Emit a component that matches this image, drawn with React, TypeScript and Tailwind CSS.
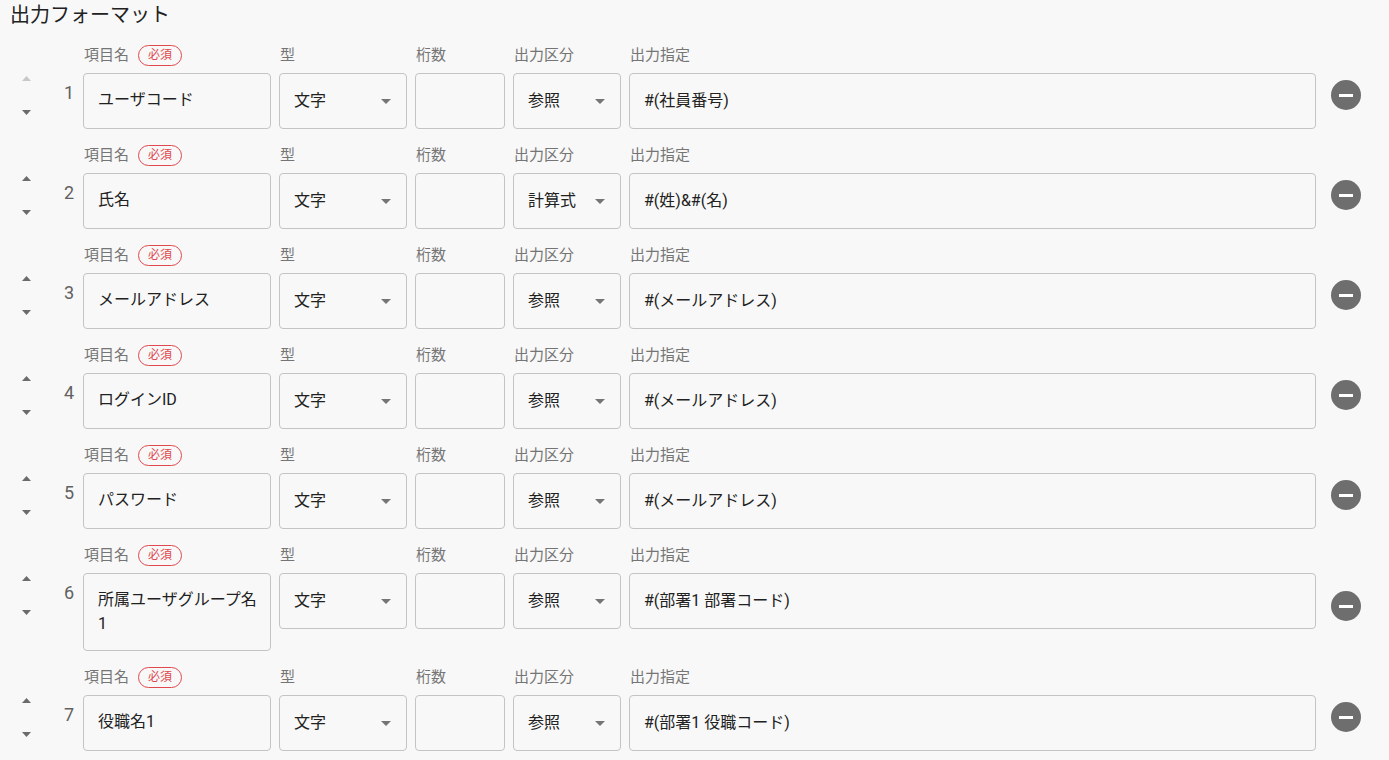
const font = {
  fontFamily: 'Roboto, "Noto Sans CJK JP", "Noto Sans", sans-serif',
};

type Row = {
  name: string;
  type: string;
  digits: string;
  kind: string;
  spec: string;
};

const rows: Row[] = [
  { name: "ユーザコード", type: "文字", digits: "", kind: "参照", spec: "#(社員番号)" },
  { name: "氏名", type: "文字", digits: "", kind: "計算式", spec: "#(姓)&#(名)" },
  { name: "メールアドレス", type: "文字", digits: "", kind: "参照", spec: "#(メールアドレス)" },
  { name: "ログインID", type: "文字", digits: "", kind: "参照", spec: "#(メールアドレス)" },
  { name: "パスワード", type: "文字", digits: "", kind: "参照", spec: "#(メールアドレス)" },
  { name: "所属ユーザグループ名1", type: "文字", digits: "", kind: "参照", spec: "#(部署1 部署コード)" },
  { name: "役職名1", type: "文字", digits: "", kind: "参照", spec: "#(部署1 役職コード)" },
];

function Caret() {
  return (
    <svg width="10" height="5" viewBox="0 0 10 5" className="shrink-0">
      <path d="M0 0 L10 0 L5 5 Z" fill="#757575" />
    </svg>
  );
}

function Arrow({ up, disabled }: { up?: boolean; disabled?: boolean }) {
  return (
    <svg width="9" height="5" viewBox="0 0 9 5">
      <path
        d={up ? "M0 5 L9 5 L4.5 0 Z" : "M0 0 L9 0 L4.5 5 Z"}
        fill={disabled ? "#c8c8c8" : "#6b6b6b"}
      />
    </svg>
  );
}

function Label({ children, required }: { children: React.ReactNode; required?: boolean }) {
  return (
    <div className="flex h-5 items-center gap-[9px] pl-px text-[15px] leading-5 text-[#757575]">
      <span>{children}</span>
      {required && (
        <span className="flex h-[21px] items-center rounded-full border border-[#e0484d] px-[9px] text-[12px] text-[#e0484d]">
          必須
        </span>
      )}
    </div>
  );
}

function Select({ value, width }: { value: string; width: string }) {
  return (
    <div
      className={`${width} box-border flex h-[56px] items-center justify-between rounded border border-[#c4c4c4] pl-[14px] pr-[15px] text-[16px] text-[#212121]`}
    >
      <span>{value}</span>
      <Caret />
    </div>
  );
}

function FieldRow({ row, index }: { row: Row; index: number }) {
  return (
    <div className="flex items-stretch">
      <div className="flex w-[83px] shrink-0 pt-[27px]">
        <div className="flex w-[52px] items-start">
          <div className="ml-[22px] flex flex-col items-center gap-[29px] pt-[4px]">
            <Arrow up disabled={index === 0} />
            <Arrow />
          </div>
        </div>
        <div className="w-[22px] pt-[11px] text-right text-[18px] leading-5 text-[#616161]">
          {index + 1}
        </div>
      </div>
      <div className="flex items-start gap-2 pb-[16px]">
        <div className="flex w-[188px] flex-col gap-2">
          <Label required>項目名</Label>
          <div className="box-border min-h-[56px] rounded border border-[#c4c4c4] py-[14px] pl-[14px] pr-[8px] text-[16px] leading-[24px] text-[#212121]">
            {row.name}
          </div>
        </div>
        <div className="flex w-[128px] flex-col gap-2">
          <Label>型</Label>
          <Select value={row.type} width="w-[128px]" />
        </div>
        <div className="flex w-[90px] flex-col gap-2">
          <Label>桁数</Label>
          <div className="box-border h-[56px] rounded border border-[#c4c4c4] px-[14px] text-[16px]">
            {row.digits}
          </div>
        </div>
        <div className="flex w-[108px] flex-col gap-2">
          <Label>出力区分</Label>
          <Select value={row.kind} width="w-[108px]" />
        </div>
        <div className="flex w-[687px] flex-col gap-2">
          <Label>出力指定</Label>
          <div className="box-border flex h-[56px] items-center rounded border border-[#c4c4c4] px-[14px] text-[16px] text-[#212121]">
            {row.spec}
          </div>
        </div>
      </div>
      <div className="ml-[15px] flex items-center">
        <div className="flex h-[30px] w-[30px] items-center justify-center rounded-full bg-[#6e6e6e]">
          <div className="h-[3px] w-[14px] bg-white" />
        </div>
      </div>
    </div>
  );
}

export default function App() {
  return (
    <div className="min-h-[760px] w-full bg-[#f8f8f8]" style={font}>
      <div className="px-[10px] pt-[1px] text-[20px] leading-[28px] text-[#212121]">
        出力フォーマット
      </div>
      <div className="pt-[16px]">
        {rows.map((r, i) => (
          <FieldRow key={i} row={r} index={i} />
        ))}
      </div>
    </div>
  );
}
